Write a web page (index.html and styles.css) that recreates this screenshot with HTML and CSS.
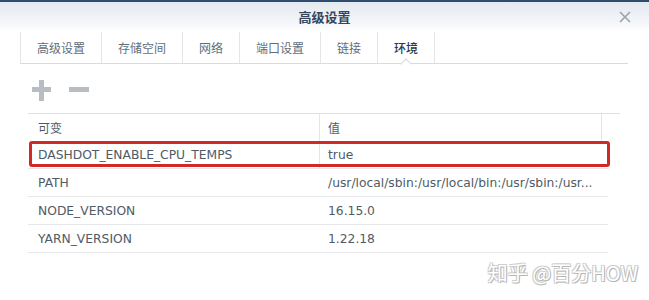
FILE: index.html
```html
<!DOCTYPE html>
<html lang="zh-CN">
<head>
  <meta charset="UTF-8">
  <title>高级设置</title>
  <link rel="stylesheet" href="styles.css">
</head>
<body>
  <div class="window">
    <div class="titlebar">
      <span class="title">高级设置</span>
      <span class="close">
        <svg width="12" height="12" viewBox="0 0 12 12"><path d="M1 1 L11 11 M11 1 L1 11" stroke="#9aa3ab" stroke-width="1.6" fill="none"/></svg>
      </span>
    </div>

    <div class="tabs">
      <div class="tab">高级设置</div>
      <div class="tab">存储空间</div>
      <div class="tab">网络</div>
      <div class="tab">端口设置</div>
      <div class="tab">链接</div>
      <div class="tab active">环境</div>
    </div>

    <div class="toolbar">
      <span class="tool plus"></span>
      <span class="tool minus"></span>
    </div>

    <div class="grid">
      <div class="row head">
        <div class="cell key">可变</div>
        <div class="cell val">值</div>
        <div class="scroll-gap"></div>
      </div>
      <div class="row selected">
        <div class="cell key">DASHDOT_ENABLE_CPU_TEMPS</div>
        <div class="cell val">true</div>
      </div>
      <div class="row">
        <div class="cell key">PATH</div>
        <div class="cell val">/usr/local/sbin:/usr/local/bin:/usr/sbin:/usr...</div>
      </div>
      <div class="row">
        <div class="cell key">NODE_VERSION</div>
        <div class="cell val">16.15.0</div>
      </div>
      <div class="row">
        <div class="cell key">YARN_VERSION</div>
        <div class="cell val">1.22.18</div>
      </div>
      <div class="highlight"></div>
    </div>

    <div class="watermark">知乎 @百分HOW</div>
  </div>
</body>
</html>
```

FILE: styles.css
```css
body {
  margin: 0;
  background: #fff;
  font-family: "DejaVu Sans", "Noto Sans CJK SC", sans-serif;
  color: #505b66;
}

.window {
  position: relative;
  width: 649px;
  height: 300px;
  overflow: hidden;
}

/* title bar */
.titlebar {
  position: relative;
  height: 30px;
  border-top: 2px solid #2f4b6d;
  background: linear-gradient(#e4e9f0, #f4f6f9 70%, #fff);
  display: flex;
  align-items: center;
  justify-content: center;
}

.title {
  font-family: "Noto Sans CJK SC", sans-serif;
  font-size: 13px;
  font-weight: 700;
  color: #34475d;
  margin-top: -1px;
}

.close {
  position: absolute;
  right: 18px;
  top: 9px;
  line-height: 0;
}

/* tabs */
.tabs {
  display: flex;
  margin: 0 21px 0 20px;
  height: 31px;
  border-bottom: 1px solid #d8dce1;
}

.tab {
  position: relative;
  display: flex;
  align-items: center;
  padding: 0 16px;
  border-left: 1px solid #e3e6e9;
  font-family: "Noto Sans CJK SC", sans-serif;
  font-size: 12px;
  color: #5f6e7d;
}

.tab.active {
  color: #2c3a48;
  font-weight: 500;
  border-right: 1px solid #e3e6e9;
}

.tab.active::after {
  content: "";
  position: absolute;
  left: 50%;
  bottom: -5px;
  width: 7px;
  height: 7px;
  margin-left: -4px;
  background: #fff;
  border-left: 1px solid #d8dce1;
  border-top: 1px solid #d8dce1;
  transform: rotate(45deg);
}

/* toolbar */
.toolbar {
  display: flex;
  gap: 18px;
  padding: 16px 0 0 32px;
  height: 21px;
}

.tool {
  position: relative;
  width: 19px;
  height: 21px;
}

.tool::before,
.plus::after {
  content: "";
  position: absolute;
  background: #b8bdc3;
}

.tool::before {
  left: 0;
  right: 0;
  top: 7px;
  height: 5px;
}

.plus::after {
  top: 0;
  bottom: 0;
  left: 7px;
  width: 5px;
}

.minus {
  width: 20px;
}

/* grid */
.grid {
  position: relative;
  margin: 12px 0 0 28px;
  width: 592px;
}

.row {
  display: flex;
  height: 27px;
  border-bottom: 1px solid #e6e8eb;
  width: 580px;
  font-size: 12.3px;
}

.row.head {
  width: 592px;
  border-top: 1px solid #dfe2e5;
  border-bottom: none;
  font-family: "Noto Sans CJK SC", sans-serif;
  font-size: 12px;
}

.cell {
  display: flex;
  align-items: center;
  padding: 0 9px 0 10px;
  white-space: nowrap;
}

.cell.key {
  width: 272px;
  border-right: 1px solid transparent;
}

.cell.val {
  flex: 1;
  min-width: 0;
  padding-left: 8px;
  padding-right: 0;
}

.row.head .cell.key,
.row.selected .cell.key {
  border-right-color: #e3e6e9;
}

.scroll-gap {
  width: 16px;
  border-left: 1px solid #e3e6e9;
}

.row.head .cell.val {
  flex: none;
  width: 273px;
}

.highlight {
  position: absolute;
  left: 1px;
  top: 28px;
  width: 575px;
  height: 20px;
  border: 3px solid #cf2a27;
  border-radius: 3px;
}

/* watermark */
.watermark {
  position: absolute;
  right: 11px;
  top: 258px;
  font-family: "Noto Sans CJK SC", sans-serif;
  font-size: 20px;
  color: #fff;
  text-shadow: 1px 1px 0 #b5b5b5, -1px -1px 0 #cfcfcf, 1px -1px 0 #cfcfcf, -1px 1px 0 #cfcfcf;
  letter-spacing: 0;
}
```
